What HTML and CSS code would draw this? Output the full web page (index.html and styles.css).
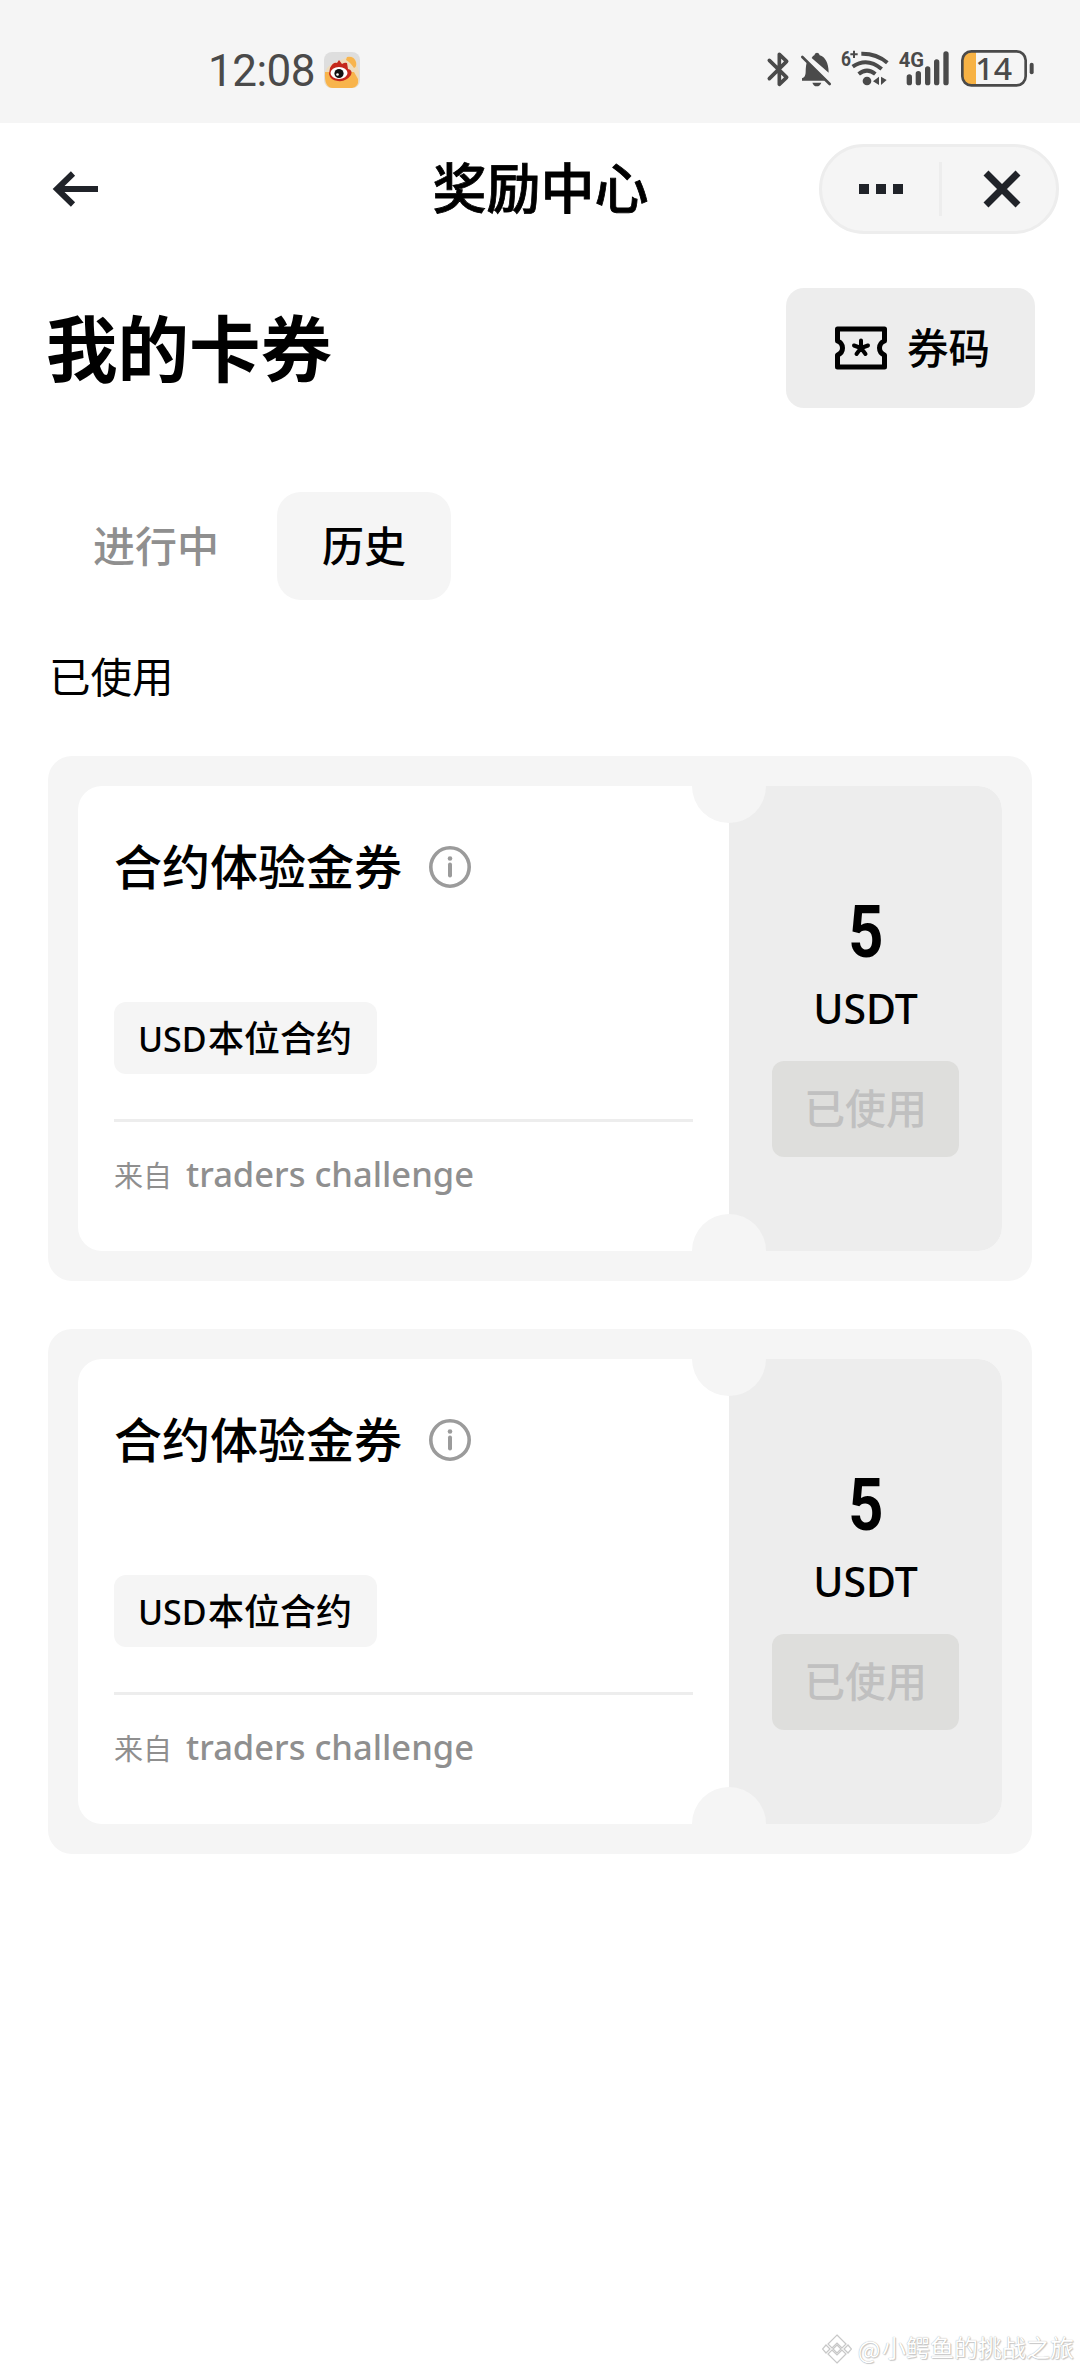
FILE: index.html
```html
<!DOCTYPE html>
<html lang="zh-CN">
<head>
<meta charset="utf-8">
<title>奖励中心</title>
<link rel="stylesheet" href="styles.css">
</head>
<body>
<div class="screen">
  <div class="status">
    <div class="status-left">
      <span class="clock">12:08</span>
      <svg class="weibo" viewBox="0 0 36 36">
        <rect width="36" height="36" rx="8" fill="#dedede"/>
        <path d="M1 20Q3 14 10 11L24 5Q30 3 32 9L35 20V28Q35 36 28 36H8Q1 36 1 28Z" fill="#eedcbc"/>
        <path d="M23 5Q30 4 32 10Q33 15 30 16Q26 10 22 8Z" fill="#f8b44c"/>
        <path d="M1 20Q0 36 9 36H28Q35 35 34 27L30 20Z" fill="#f8b44c"/>
        <path d="M6 16Q9 10 13 11L15 8L18 12Q21 10 23 11L24 17Q29 18 27 23Q22 30 14 29Q6 28 5 22Z" fill="#c5281c"/>
        <ellipse cx="15" cy="21" rx="8.5" ry="6" fill="#fff"/>
        <circle cx="15" cy="21.5" r="4.600" fill="#111"/>
        <circle cx="13.500" cy="22.500" r="1.300" fill="#fff"/>
      </svg>
    </div>
    <div class="status-icons">
      <svg width="34" height="42" viewBox="39 30 102 126"><path d="M55 73L107 124L85 145V55L107 76L55 128" fill="none" stroke="#4a4a4a" stroke-width="11" stroke-linecap="round" stroke-linejoin="round"/></svg>
      <svg width="40" height="42" viewBox="141 30 120 126" fill="#4a4a4a">
        <path d="M182 66Q186 59 190 58Q191 50 198 50Q205 50 206 58Q232 66 233 110Z"/>
        <path d="M168 78L222 134H153V127Q164 124 164 108Q164 88 168 78ZM184 140H211Q207 151 197 151Q188 151 184 140Z"/>
        <path d="M154 63L236 144" stroke="#4a4a4a" stroke-width="8" stroke-linecap="round"/>
      </svg>
      <svg width="56" height="42" viewBox="261 30 168 126" fill="none" stroke="#4a4a4a" stroke-width="12" stroke-linecap="butt">
        <path d="M331 53Q376 52 409 80M305 92Q348 62 392 99M323 114Q348 94 373 114"/>
        <circle cx="348" cy="135" r="13" fill="#4a4a4a" stroke="none"/>
        <path d="M384 122V147L366 136ZM390 122V147L407 132Z" fill="#4a4a4a" stroke="none"/>
        <text x="270" y="91" class="net net-wifi" textLength="30" lengthAdjust="spacingAndGlyphs">6</text>
        <path d="M298 55H320M309 44V66" stroke-width="6"/>
      </svg>
      <svg width="61" height="42" viewBox="429 30 183 126">
        <text x="443" y="94" class="net net-cell" textLength="76" lengthAdjust="spacingAndGlyphs">4G</text>
        <path d="M475 123V140M502 113V140M530 99V140M557 78V140M585 54V140" stroke="#4a4a4a" stroke-width="16" stroke-linecap="round"/>
      </svg>
      <svg width="86" height="42" viewBox="612 30 258 126">
        <path d="M675 47V147H660Q636 147 636 122V70Q636 47 660 47Z" fill="#f7b244"/>
        <rect x="634" y="46" width="190" height="102" rx="27" fill="none" stroke="#4a4a4a" stroke-width="8"/>
        <path d="M842 86V109" stroke="#4a4a4a" stroke-width="12" stroke-linecap="round"/>
        <text x="673" y="131" class="level" textLength="110" lengthAdjust="spacingAndGlyphs">14</text>
      </svg>
    </div>
  </div>

  <div class="nav">
    <svg class="back" viewBox="0 0 48 42" fill="none" stroke="#202329" stroke-width="6"><path d="M47 21H7M22 5.500L6 21L22 36.500"/></svg>
    <div class="nav-title">奖励中心</div>
    <div class="capsule">
      <div class="dots"><i></i><i></i><i></i></div>
      <div class="rule"></div>
      <div class="close"><svg width="38" height="38" viewBox="0 0 38 38"><path d="M3 3L35 35M35 3L3 35" stroke="#202329" stroke-width="7"/></svg></div>
    </div>
  </div>

  <div class="heading">
    <h1>我的卡券</h1>
    <div class="code-btn">
      <svg width="54" height="46" viewBox="0 0 54 46" fill="none" stroke="#000" stroke-width="5" stroke-linejoin="round" stroke-linecap="round">
        <path d="M3.500 4H50.500V16Q45.500 18 45.500 23Q45.500 28 50.500 30V42H3.500V30Q8.500 28 8.500 23Q8.500 18 3.500 16Z"/>
        <path d="M27 23V15.500M27 23L34 20.500M27 23L31.500 29M27 23L22.500 29M27 23L20 20.500" stroke-width="4"/>
      </svg>
      <span>券码</span>
    </div>
  </div>

  <div class="tabs">
    <div class="tab">进行中</div>
    <div class="tab active">历史</div>
  </div>

  <div class="section">已使用</div>

  <div class="list">
    <div class="card">
      <div class="coupon">
        <div class="info">
          <div class="name"><span>合约体验金券</span>
            <svg width="42" height="42" viewBox="0 0 42 42"><circle cx="21" cy="21" r="19.200" fill="none" stroke="#9b9b9b" stroke-width="3.600"/><path d="M21 18.500V29.500" stroke="#9b9b9b" stroke-width="4" stroke-linecap="round"/><circle cx="21" cy="12.500" r="2.300" fill="#9b9b9b"/></svg>
          </div>
          <div class="tag"><span class="latin">USD</span><span>本位合约</span></div>
          <div class="from"><span>来自</span><span class="source">traders challenge</span></div>
        </div>
        <div class="value">
          <div class="amount">5</div>
          <div class="unit">USDT</div>
          <div class="used">已使用</div>
        </div>
      </div>
    </div>
    <div class="card">
      <div class="coupon">
        <div class="info">
          <div class="name"><span>合约体验金券</span>
            <svg width="42" height="42" viewBox="0 0 42 42"><circle cx="21" cy="21" r="19.200" fill="none" stroke="#9b9b9b" stroke-width="3.600"/><path d="M21 18.500V29.500" stroke="#9b9b9b" stroke-width="4" stroke-linecap="round"/><circle cx="21" cy="12.500" r="2.300" fill="#9b9b9b"/></svg>
          </div>
          <div class="tag"><span class="latin">USD</span><span>本位合约</span></div>
          <div class="from"><span>来自</span><span class="source">traders challenge</span></div>
        </div>
        <div class="value">
          <div class="amount">5</div>
          <div class="unit">USDT</div>
          <div class="used">已使用</div>
        </div>
      </div>
    </div>
  </div>

  <div class="watermark">
    <svg width="30" height="32" viewBox="0 0 30 32" fill="none" stroke="#c8c8c8" stroke-width="1.200">
      <path d="M15 2L24 11L20 15L15 10L10 15L6 11ZM15 30L24 21L20 17L15 22L10 17L6 21ZM15 12L19 16L15 20L11 16ZM4 12L8 16L4 20L0.500 16ZM26 12L29.500 16L26 20L22 16Z"/>
    </svg>
    <span class="at">@</span><span class="author">小鳄鱼的挑战之旅</span>
  </div>
</div>
</body>
</html>
```
FILE: styles.css
```css
* { box-sizing: border-box; }

body {
  margin: 0;
  background: #fff;
  color: #000;
  font-family: "Noto Sans CJK SC", sans-serif;
}

.screen {
  position: relative;
  width: 1080px;
  height: 2376px;
  overflow: hidden;
}

svg { display: block; flex: none; }

.status {
  height: 123px;
  background: #f5f5f5;
  display: flex;
  justify-content: space-between;
  align-items: flex-start;
  padding: 46px 39px 0 208px;
}

.status-left {
  display: flex;
  align-items: center;
  height: 48px;
}

.clock {
  width: 116px;
  font: 400 44px/48px Roboto, sans-serif;
  letter-spacing: -0.5px;
  padding-top: 2px;
  color: #4a4a4a;
}

.weibo { width: 36px; height: 36px; }

.status-icons { display: flex; }

.net {
  font: 700 54px Roboto, sans-serif;
  fill: #4a4a4a;
  stroke: none;
}

.net-wifi { font-size: 62px; }
.net-cell { font-size: 62px; }

.level {
  font: 500 94px "Noto Sans", sans-serif;
  fill: #4a4a4a;
}

.nav {
  height: 132px;
  display: grid;
  grid-template-columns: 1fr 1fr 1fr;
  align-items: center;
  padding: 0 21px 0 51px;
}

.back { width: 48px; height: 42px; }

.nav-title {
  font-size: 54px;
  line-height: 80px;
  font-weight: 500;
  -webkit-text-stroke: 0.8px #000;
  text-align: center;
  white-space: nowrap;
  margin-left: -29px;
  padding-bottom: 6px;
}

.capsule {
  justify-self: end;
  width: 240px;
  height: 90px;
  border: 3px solid #ededed;
  border-radius: 45px;
  background: #f5f5f5;
  display: flex;
  align-items: center;
}

.dots {
  width: 117px;
  display: flex;
  justify-content: center;
  gap: 7px;
}

.dots i { width: 10px; height: 10px; background: #202329; }

.rule { width: 3px; height: 54px; background: #ededed; }

.close { flex: 1; display: flex; justify-content: center; padding-left: 6px; }

.heading {
  display: flex;
  justify-content: space-between;
  align-items: center;
  height: 120px;
  margin-top: 33px;
  padding: 0 45px 0 46px;
}

h1 {
  margin: 0;
  padding-bottom: 7px;
  font-size: 71.500px;
  line-height: 100px;
  font-weight: 700;
}

.code-btn {
  width: 249px;
  height: 120px;
  border-radius: 18px;
  background: #ededed;
  display: flex;
  align-items: center;
  padding-left: 48px;
  gap: 19px;
  font-size: 41.500px;
  font-weight: 500;
}

.code-btn span { padding-bottom: 5px; }

.tabs {
  display: flex;
  gap: 13px;
  margin-top: 84px;
  padding-left: 48px;
}

.tab {
  height: 108px;
  padding: 0 45px;
  border-radius: 24px;
  line-height: 104px;
  font-size: 42px;
  font-weight: 500;
  color: #8f8f8f;
}

.tab.active { background: #f5f5f5; color: #000; }

.section {
  margin: 45px 0 51px 49px;
  font-size: 41.500px;
  line-height: 60px;
}

.list {
  display: flex;
  flex-direction: column;
  gap: 48px;
  padding: 0 48px;
}

.card {
  height: 525px;
  padding: 30px;
  border-radius: 24px;
  background: #f5f5f5;
}

.coupon {
  position: relative;
  display: flex;
  height: 465px;
  border-radius: 24px;
  background: #fff;
  overflow: hidden;
}

.coupon::before,
.coupon::after {
  content: "";
  position: absolute;
  left: 614px;
  width: 74px;
  height: 74px;
  border-radius: 50%;
  background: #f5f5f5;
}

.coupon::before { top: -37px; }
.coupon::after { bottom: -37px; }

.info {
  width: 651px;
  padding: 45px 36px 0;
}

.name {
  display: flex;
  align-items: center;
  gap: 27px;
  height: 72px;
  font-size: 48px;
  font-weight: 500;
}

.name span { padding-bottom: 7px; }

.tag {
  display: flex;
  align-items: baseline;
  width: 263px;
  height: 72px;
  margin-top: 99px;
  padding-left: 24px;
  border-radius: 12px;
  background: #f5f5f5;
  font-size: 36px;
  font-weight: 500;
  line-height: 68px;
}

.latin {
  width: 70px;
  font-family: "Noto Sans", sans-serif;
  font-size: 34px;
}

.from {
  display: flex;
  align-items: baseline;
  gap: 14px;
  width: 579px;
  margin-top: 45px;
  padding-top: 25px;
  border-top: 3px solid #ededed;
  color: #8f8f8f;
  font-size: 29px;
  line-height: 54px;
}

.source {
  font: 500 34.500px/54px "Noto Sans", sans-serif;
  white-space: nowrap;
}

.value {
  flex: 1;
  display: flex;
  flex-direction: column;
  align-items: center;
  padding-top: 104px;
  background: #ededed;
}

.amount {
  font: 700 73px/84px Roboto, sans-serif;
  transform: scaleX(.84);
}

.unit {
  margin-top: 6px;
  font: 500 41px/56px "Noto Sans", sans-serif;
}

.used {
  width: 187px;
  height: 96px;
  margin-top: 25px;
  border-radius: 12px;
  background: #dededc;
  color: #c0c0c0;
  font-size: 41px;
  font-weight: 500;
  line-height: 91px;
  text-align: center;
}

.watermark {
  position: absolute;
  left: 822px;
  bottom: 9px;
  display: flex;
  align-items: center;
  height: 36px;
  color: #fff;
  font-size: 24px;
  line-height: 36px;
  white-space: nowrap;
  text-shadow: 0 0 1px #999, 1px 1px 1px #ccc;
}

.at {
  width: 26px;
  margin-left: 4px;
  text-align: center;
}

.author { padding-bottom: 4px; }
```
